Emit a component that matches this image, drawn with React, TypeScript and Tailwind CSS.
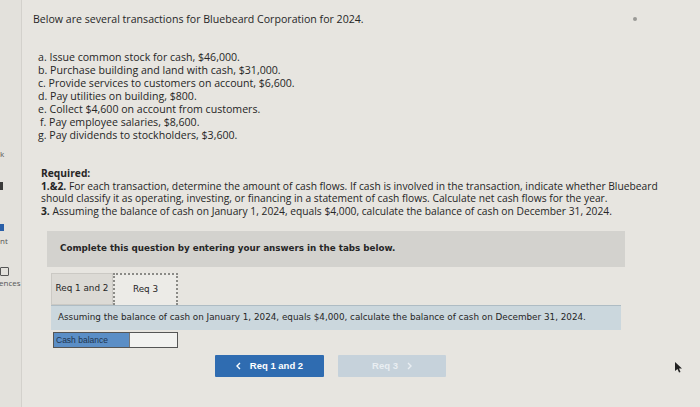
import React from "react";

const items = [
  "a. Issue common stock for cash, $46,000.",
  "b. Purchase building and land with cash, $31,000.",
  "c. Provide services to customers on account, $6,600.",
  "d. Pay utilities on building, $800.",
  "e. Collect $4,600 on account from customers.",
  "f. Pay employee salaries, $8,600.",
  "g. Pay dividends to stockholders, $3,600.",
];

export default function App() {
  return (
    <div className="w-[700px] h-[407px] overflow-hidden flex bg-[#e7e5e0] text-[#262626] font-['Open_Sans',sans-serif]">
      {/* left sidebar strip */}
      <div className="w-[21px] shrink-0 flex">
        <div className="w-[3px] bg-[#8d8c88]" />
        <div className="flex-1 border-r border-[#d3d1cc] bg-[#e3e1dc] flex flex-col text-[8px] leading-none text-[#555]">
          <div className="h-[150px]" />
          <span>k</span>
          <div className="mt-[24px] w-[3px] h-[8px] bg-[#3a3a3a]" />
          <div className="mt-[34px] w-[4px] h-[7px] bg-[#2a5fa8]" />
          <span className="mt-[6px]">nt</span>
          <div className="mt-[22px] w-[9px] h-[9px] border border-[#555] rounded-[1px]" />
          <span className="mt-[3px] -ml-[1px]">ences</span>
        </div>
      </div>

      <div className="flex-1 relative pl-[12px]">
        <div className="absolute left-[612px] top-[17px] w-[4px] h-[4px] rounded-full bg-[#9a9a96]" />
        <p className="pt-[12px] text-[10.6px] leading-[14px]">
          Below are several transactions for Bluebeard Corporation for 2024.
        </p>

        <div className="mt-[25px] pl-[5px] text-[10.6px] leading-[13px]">
          {items.map((t, i) => (
            <div key={i} className={t.startsWith("f.") ? "pl-[2px]" : ""}>
              {t}
            </div>
          ))}
        </div>

        <div className="mt-[25px] pl-[8px] text-[10.25px] leading-[12.5px]">
          <div className="font-bold">Required:</div>
          <div>
            <span className="font-bold">1.&amp;2.</span> For each transaction, determine the amount of cash flows. If cash is involved in the transaction, indicate whether Bluebeard
            <br />
            should classify it as operating, investing, or financing in a statement of cash flows. Calculate net cash flows for the year.
          </div>
          <div>
            <span className="font-bold">3.</span> Assuming the balance of cash on January 1, 2024, equals $4,000, calculate the balance of cash on December 31, 2024.
          </div>
        </div>

        <div className="mt-[14px] ml-[14px] w-[578px] h-[36px] bg-[#d3d2ce] flex items-center pl-[13px] font-['DejaVu_Sans',sans-serif] text-[8.75px] font-bold">
          Complete this question by entering your answers in the tabs below.
        </div>

        <div className="ml-[18px] mt-[6px] w-[570px] font-['DejaVu_Sans',sans-serif] text-[8.8px]">
          <div className="flex h-[32px]">
            <div className="w-[62px] bg-[#dcdad5] border border-[#cbc9c4] flex items-center justify-center">
              Req 1 and 2
            </div>
            <div className="w-[65px] bg-[#ecebe7] border-2 border-dotted border-[#8a8a86] border-b-0 flex items-center justify-center">
              Req 3
            </div>
          </div>
          <div className="h-[25px] bg-[#cbd7dd] border-t border-[#aebcc4] flex items-center pl-[7px]">
            Assuming the balance of cash on January 1, 2024, equals $4,000, calculate the balance of cash on December 31, 2024.
          </div>
          <div className="mt-[2px] ml-[2px] w-fit flex h-[16px] border border-[#555]">
            <div className="w-[75px] bg-[#5b8ec6] text-[#1f3550] text-[8.5px] flex items-center pl-[2px] font-['Liberation_Sans',sans-serif]">
              Cash balance
            </div>
            <div className="w-[48px] bg-[#f2f2f0] border-l border-[#777]" />
          </div>
          <div className="mt-[7px] ml-[164px] flex gap-[14px] font-['Liberation_Sans',sans-serif] font-bold text-[9.5px]">
            <button className="w-[109px] h-[22px] bg-[#2f6cb1] text-white flex items-center justify-center gap-[9px] rounded-[1px]">
              <svg width="5" height="8" viewBox="0 0 5 8">
                <path d="M4 1 L1 4 L4 7" stroke="white" strokeWidth="1.4" fill="none" />
              </svg>
              Req 1 and 2
            </button>
            <button className="w-[108px] h-[22px] bg-[#c6d2db] text-[#e9eef2] flex items-center justify-center gap-[9px] rounded-[1px]">
              Req 3
              <svg width="5" height="8" viewBox="0 0 5 8">
                <path d="M1 1 L4 4 L1 7" stroke="#e9eef2" strokeWidth="1.4" fill="none" />
              </svg>
            </button>
          </div>
        </div>

        {/* mouse cursor */}
        <svg className="absolute left-[654px] top-[362px]" width="8" height="11" viewBox="0 0 8 11">
          <path d="M0 0 L0 9 L2.5 7 L4 10.5 L5.5 10 L4 6.5 L7 6.5 Z" fill="#222" />
        </svg>
      </div>
    </div>
  );
}
